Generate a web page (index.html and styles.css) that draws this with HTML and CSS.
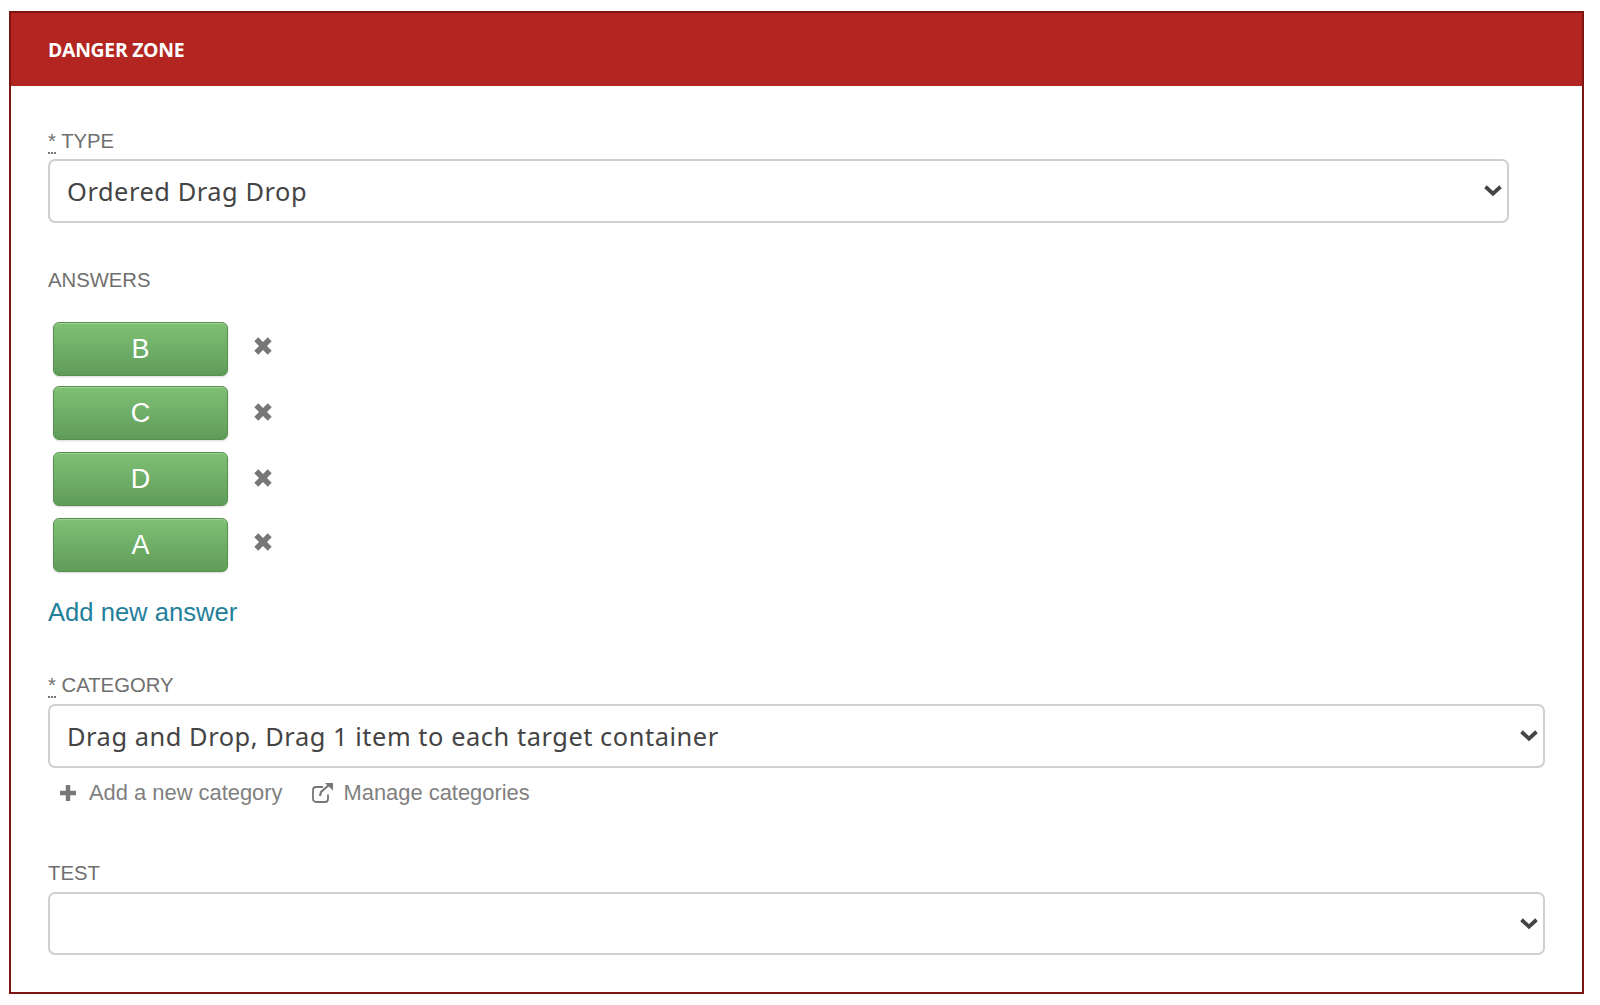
FILE: index.html
```html
<!DOCTYPE html>
<html lang="en">
<head>
<meta charset="utf-8">
<title>Danger Zone</title>
<link rel="stylesheet" href="styles.css">
</head>
<body>
<section class="panel">
  <header class="panel-head">DANGER ZONE</header>
  <div class="panel-body">
    <div class="field field-type">
      <label class="label"><abbr class="req">*</abbr> TYPE</label>
      <div class="select-wrap narrow">
        <select class="select"><option>Ordered Drag Drop</option></select>
        <svg class="chev" viewBox="0 0 16 10"><path d="M2 2l6 5.5L14 2" fill="none" stroke="#444" stroke-width="3"/></svg>
      </div>
    </div>
    <div class="field field-answers">
      <div class="label">ANSWERS</div>
      <ul class="answers">
        <li class="answer a1"><span class="pill">B</span><svg class="x" viewBox="0 0 18 18"><path d="M3.5 3.5l11 11M14.5 3.5l-11 11" stroke="#777" stroke-width="4.6"/></svg></li>
        <li class="answer a2"><span class="pill">C</span><svg class="x" viewBox="0 0 18 18"><path d="M3.5 3.5l11 11M14.5 3.5l-11 11" stroke="#777" stroke-width="4.6"/></svg></li>
        <li class="answer a3"><span class="pill">D</span><svg class="x" viewBox="0 0 18 18"><path d="M3.5 3.5l11 11M14.5 3.5l-11 11" stroke="#777" stroke-width="4.6"/></svg></li>
        <li class="answer a4"><span class="pill">A</span><svg class="x" viewBox="0 0 18 18"><path d="M3.5 3.5l11 11M14.5 3.5l-11 11" stroke="#777" stroke-width="4.6"/></svg></li>
      </ul>
      <a class="add-answer" href="#">Add new answer</a>
    </div>
    <div class="field field-category">
      <label class="label"><abbr class="req">*</abbr> CATEGORY</label>
      <div class="select-wrap">
        <select class="select"><option>Drag and Drop, Drag 1 item to each target container</option></select>
        <svg class="chev" viewBox="0 0 16 10"><path d="M2 2l6 5.5L14 2" fill="none" stroke="#444" stroke-width="3"/></svg>
      </div>
      <div class="links">
        <a class="link" href="#"><svg class="ico-plus" viewBox="0 0 18 18"><path d="M9 1v16M1 9h16" stroke="#777" stroke-width="4.4"/></svg>Add a new category</a>
        <a class="link" href="#"><svg class="ico-ext" viewBox="0 0 24 22"><path d="M17 12.5V17a3 3 0 0 1-3 3H5a3 3 0 0 1-3-3V8a3 3 0 0 1 3-3h7" fill="none" stroke="#777" stroke-width="1.8"/><path d="M9 14l1-4 9-8" fill="none" stroke="#777" stroke-width="2.2"/><path d="M14 1h8v7.5z" fill="#777"/></svg>Manage categories</a>
      </div>
    </div>
    <div class="field field-test">
      <label class="label">TEST</label>
      <div class="select-wrap test">
        <select class="select"><option></option></select>
        <svg class="chev" viewBox="0 0 16 10"><path d="M2 2l6 5.5L14 2" fill="none" stroke="#444" stroke-width="3"/></svg>
      </div>
    </div>
  </div>
</section>
</body>
</html>
```
FILE: styles.css
```css
* { box-sizing: border-box; }
html, body { margin: 0; padding: 0; background: #fff; }
body { padding: 11px 16px 0 9px; font-family: "Liberation Sans", Arial, sans-serif; height: 1005px; overflow: hidden; }
.panel { border: 2px solid #7d1512; height: 983px; }
.panel-head { height: 73px; background: #b22520; color: #fff; font-family: "Open Sans", sans-serif; font-weight: 700; font-size: 19.4px; letter-spacing: -0.3px; line-height: 74px; padding-left: 37px; }
.panel-body { padding: 43px 0 0 37px; }
.label { display: block; color: #6f6f6f; font-size: 20.3px; line-height: 24px; }
.req { position: relative; display: inline-block; text-decoration: none; }
.req::after { content: ""; position: absolute; left: 0; width: 8px; bottom: -1px; border-bottom: 2px dotted #777; }
.select-wrap { position: relative; width: 1497px; height: 64px; }
.select-wrap.narrow { width: 1461px; }
.select-wrap.test { height: 63px; }
.select { display: block; width: 100%; height: 100%; appearance: none; -webkit-appearance: none; background: #fff; border: 2px solid #cfcfcf; border-radius: 7px; padding: 0 40px 0 17px; font-family: "Noto Sans", sans-serif; font-size: 25.4px; letter-spacing: 0.55px; color: #444; outline: none; }
.chev { position: absolute; right: 6px; top: 25px; width: 20px; height: 13px; pointer-events: none; }
.field-type .label { margin-bottom: 6px; }
.field-answers { margin-top: 45px; }
.answers { list-style: none; margin: 30px 0 0 5px; padding: 0; }
.answer { display: flex; align-items: flex-start; height: 54px; }
.answer.a1 { margin-bottom: 10px; }
.answer.a2 { margin-bottom: 12px; }
.answer.a3 { margin-bottom: 12px; }
.pill { display: block; width: 175px; height: 54px; border: 1px solid #58914f; border-radius: 6px; background: linear-gradient(#7fc074, #5f9c5a); box-shadow: inset 0 1px 0 rgba(255,255,255,.25), 0 1px 2px rgba(0,0,0,.15); color: #fff; font-size: 27px; line-height: 53px; text-align: center; }
.x { width: 22px; height: 22px; margin: 13px 0 0 24px; }
.a3 .x, .a2 .x { margin-top: 15px; }
.add-answer { display: block; margin-top: 25px; color: #23809b; font-size: 25.6px; line-height: 30px; text-decoration: none; }
.field-category { margin-top: 46px; }
.field-category .label { margin-bottom: 7px; }
.links { display: flex; gap: 28px; margin: 11px 0 0 11px; }
.link { display: flex; align-items: center; color: #7f7f7f; font-size: 21.9px; line-height: 28px; text-decoration: none; }
.ico-plus { width: 18px; height: 18px; margin-right: 12px; }
.ico-ext { width: 24px; height: 22px; margin-right: 9px; }
.field-test { margin-top: 54px; }
.field-test .label { margin-bottom: 7px; }
```
